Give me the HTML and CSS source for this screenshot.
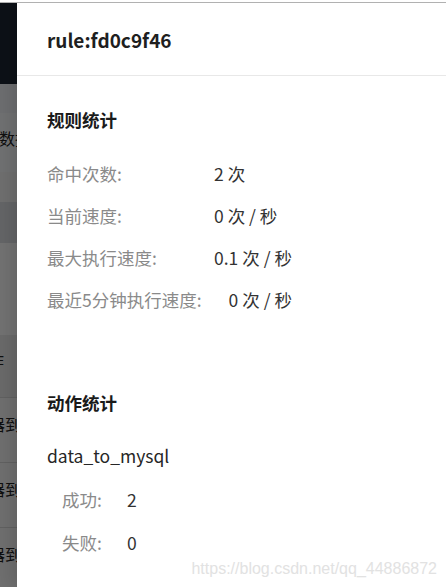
FILE: index.html
```html
<!DOCTYPE html>
<html>
<head>
	<meta charset="UTF-8">
	<link rel="stylesheet" href="styles.css">
</head>
<body>
	<div class="chrome"></div>

	<div class="stage">
		<!-- page behind the drawer -->
		<div class="page">
			<div class="page_header"></div>
			<div class="band band_a"></div>
			<div class="band band_b"><span class="cut">数据</span></div>
			<div class="band band_c"></div>
			<div class="band band_d"></div>
			<div class="band band_e"></div>
			<div class="band band_f"><span class="cut cut_far">操作</span></div>
			<div class="page_row"><span class="cut cut_mid">服务器到</span></div>
			<div class="page_row"><span class="cut cut_mid">服务器到</span></div>
			<div class="page_row"><span class="cut cut_mid">服务器到</span></div>
		</div>
		<div class="mask"></div>

		<div class="drawer">
			<div class="drawer_header">rule:fd0c9f46</div>
			<div class="drawer_body">
				<h3 class="section_title">规则统计</h3>
				<div class="stat_row"><span class="stat_label">命中次数:</span><span class="stat_value">2 次</span></div>
				<div class="stat_row"><span class="stat_label">当前速度:</span><span class="stat_value">0 次 / 秒</span></div>
				<div class="stat_row"><span class="stat_label">最大执行速度:</span><span class="stat_value">0.1 次 / 秒</span></div>
				<div class="stat_row"><span class="stat_label">最近5分钟执行速度:</span><span class="stat_value">0 次 / 秒</span></div>

				<h3 class="section_title section_gap">动作统计</h3>
				<div class="action_name">data_to_mysql</div>
				<div class="action_row"><span class="action_label">成功:</span><span class="stat_value">2</span></div>
				<div class="action_row"><span class="action_label">失败:</span><span class="stat_value">0</span></div>
			</div>
			<div class="watermark">https://blog.csdn.net/qq_44886872</div>
		</div>
	</div>
</body>
</html>
```

FILE: styles.css
```css
html, body{
	margin:0;
	padding:0;
}
body{
	width:446px;
	height:587px;
	overflow:hidden;
	background:#fff;
	font-family:"Noto Sans CJK SC", "Liberation Sans", sans-serif;
}

.chrome{
	height:2px;
	background:#fff;
	border-bottom:1px solid #b1b1b1;
}

.stage{
	position:relative;
	height:584px;
	overflow:hidden;
}

/* background page */
.page{
	display:flex;
	flex-direction:column;
	width:446px;
	background:#fbfbfb;
}
.page_header{
	height:81px;
	background:#1d2633;
}
.band{
	overflow:hidden;
	white-space:nowrap;
	font-size:16px;
	color:#222;
}
.band_a{ height:29px; background:#f2f4f9; }
.band_b{ height:59px; background:#f9fbfd; line-height:50px; }
.band_c{ height:30px; background:#f7f7f7; }
.band_d{ height:41px; background:#dee0e5; }
.band_e{ height:92px; background:#fcfcfc; }
.band_f{ height:62px; background:#ececec; line-height:50px; border-bottom:1px solid #d7d7d7; }

.page_row{
	height:64px;
	line-height:52px;
	background:#f6f6f6;
	border-bottom:1px solid #d7d7d7;
	font-size:16px;
	color:#222;
	white-space:nowrap;
	overflow:hidden;
}
.cut{
	display:inline-block;
	margin-left:-1px;
}
.cut_far{ margin-left:-28px; }
.cut_mid{ margin-left:-43px; }

.mask{
	position:absolute;
	left:0;
	top:0;
	right:0;
	bottom:0;
	background:rgba(0,0,0,0.55);
}

/* drawer */
.drawer{
	position:absolute;
	top:0;
	right:0;
	bottom:0;
	width:429px;
	background:#fff;
	box-shadow:-6px 0 16px rgba(0,0,0,0.12);
}
.drawer_header{
	height:72px;
	display:flex;
	align-items:center;
	padding-left:30px;
	border-bottom:1px solid #e8e8e8;
	font-size:19px;
	font-weight:bold;
	color:#1f1f1f;
}
.drawer_body{
	padding:32px 0 0 30px;
}
.section_title{
	margin:0 0 21px 0;
	height:24px;
	line-height:24px;
	font-size:17.5px;
	font-weight:bold;
	color:#1a1a1a;
}
.section_gap{
	margin-top:70px;
	margin-bottom:29px;
}

.stat_row{
	display:flex;
	height:42px;
	line-height:42px;
	font-size:17.5px;
}
.stat_label{
	min-width:140px;
	margin-right:27px;
	color:#8a8a8a;
}
.stat_value{
	color:#333;
}

.action_name{
	height:24px;
	line-height:24px;
	font-size:17.5px;
	color:#262626;
	margin-bottom:10px;
}
.action_row{
	display:flex;
	height:43px;
	line-height:43px;
	padding-left:15px;
	font-size:17.5px;
}
.action_label{
	width:65px;
	color:#8a8a8a;
}

.watermark{
	position:absolute;
	right:9px;
	bottom:9px;
	font-family:"Liberation Sans", sans-serif;
	font-size:16px;
	color:#e2e2e2;
	white-space:nowrap;
}
```
